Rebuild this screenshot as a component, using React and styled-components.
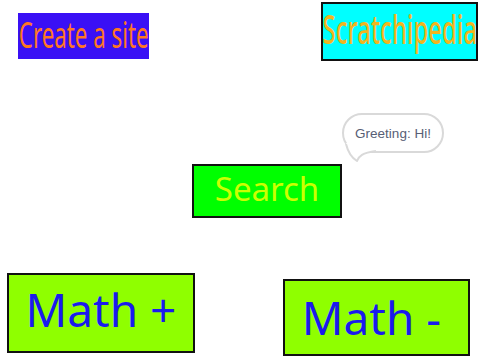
import styled, { createGlobalStyle } from "styled-components";

const Global = createGlobalStyle`
  html, body {
    margin: 0;
    padding: 0;
    background: #ffffff;
  }
`;

const Stage = styled.div`
  position: relative;
  width: 480px;
  height: 360px;
  overflow: hidden;
  background: #ffffff;
  font-family: "Noto Sans", "Open Sans", sans-serif;
`;

// sprites sit on a free canvas, so their place is the content itself
const Sprite = styled.div`
  position: absolute;
  left: ${(p) => p.$x}px;
  top: ${(p) => p.$y}px;
  width: ${(p) => p.$w}px;
  height: ${(p) => p.$h}px;
  box-sizing: border-box;
  display: flex;
  align-items: center;
  justify-content: center;
  padding: ${(p) => p.$pad || "0"};
  background: ${(p) => p.$bg};
  border: ${(p) => (p.$border ? "2px solid #111" : "none")};
  color: ${(p) => p.$color};
  font-size: ${(p) => p.$size}px;
  font-weight: ${(p) => p.$weight || 400};
  line-height: 1;
  white-space: nowrap;
`;

const Narrow = styled.span`
  display: inline-block;
  flex-shrink: 0;
  transform: scaleX(${(p) => p.$sx});
  transform-origin: center;
`;

const Bubble = styled.div`
  position: absolute;
  left: 342px;
  top: 113px;
  width: 102px;
  height: 40px;
  box-sizing: border-box;
  border: 2px solid #d9d9d9;
  border-radius: 20px;
  background: #fff;
  display: flex;
  align-items: center;
  justify-content: center;
  font-family: "Liberation Sans", Arial, sans-serif;
  font-size: 13.5px;
  color: #575e75;
`;

const Tail = styled.svg`
  position: absolute;
  left: 342px;
  top: 143px;
`;

export default function App() {
  return (
    <>
      <Global />
      <Stage>
        <Sprite $x={18} $y={13} $w={131} $h={46} $bg="#3a10f5" $color="#ff7722" $size={36} $pad="0 0 2px">
          <Narrow $sx={0.62}>Create a site</Narrow>
        </Sprite>
        <Sprite $x={321} $y={2} $w={157} $h={59} $bg="#00ffff" $border $color="#f2b51e" $size={40} $weight={500} $pad="0 0 6px">
          <Narrow $sx={0.6}>Scratchipedia</Narrow>
        </Sprite>
        <Bubble>Greeting: Hi!</Bubble>
        <Tail width="40" height="22" viewBox="0 0 40 22">
          <path d="M4 0 C6 9 10 15 15 18 C17 13 20 10 34 8 L34 0 Z" fill="#fff" />
          <path d="M4 1 C6 9 10 15 15 18 C17 13 20 10 34 8" fill="none" stroke="#d9d9d9" strokeWidth="2" strokeLinejoin="round" />
        </Tail>
        <Sprite $x={192} $y={164} $w={150} $h={54} $bg="#00ff00" $border $color="#ccff00" $size={33} $pad="0 0 6px">
          Search
        </Sprite>
        <Sprite $x={7} $y={273} $w={188} $h={80} $bg="#8fff00" $border $color="#1a1aee" $size={46} $pad="0 0 8px">
          Math +
        </Sprite>
        <Sprite $x={283} $y={279} $w={187} $h={77} $bg="#8fff00" $border $color="#1a1aee" $size={46} $pad="0 10px 2px 0">
          Math -
        </Sprite>
      </Stage>
    </>
  );
}
